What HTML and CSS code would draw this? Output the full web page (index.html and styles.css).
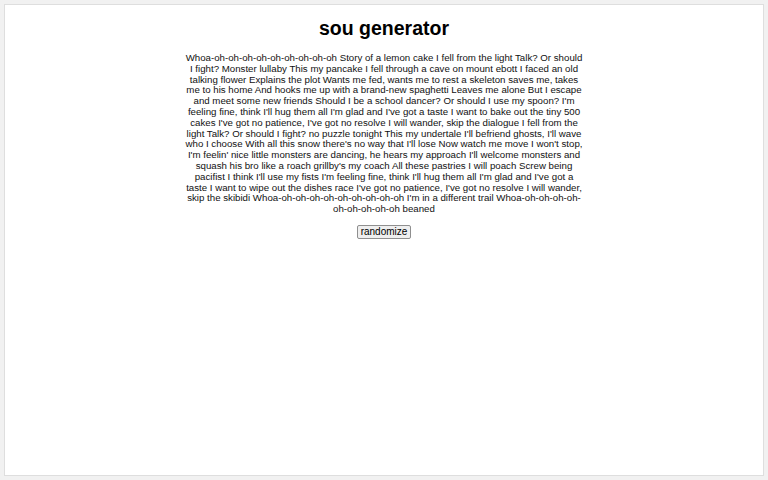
FILE: index.html
```html
<!DOCTYPE html>
<html lang="en">
<head>
    <meta charset="UTF-8">
    <title>sou generator</title>
    <link rel="stylesheet" href="styles.css">
</head>
<body>
    <div class="page">
        <h1 class="title">sou generator</h1>

        <p class="lyrics" id="lyrics">
            Whoa-oh-oh-oh-oh-oh-oh-oh-oh-oh Story of a lemon cake I fell from the light Talk? Or should I
            fight? Monster lullaby This my pancake I fell through a cave on mount ebott I faced an old
            talking flower Explains the plot Wants me fed, wants me to rest a skeleton saves me, takes me
            to his home And hooks me up with a brand-new spaghetti Leaves me alone But I escape and
            meet some new friends Should I be a school dancer? Or should I use my spoon? I'm feeling fine,
            think I'll hug them all I'm glad and I've got a taste I want to bake out the tiny 500 cakes I've got no
            patience, I've got no resolve I will wander, skip the dialogue I fell from the light Talk? Or
            should I fight? no puzzle tonight This my undertale I'll befriend ghosts, I'll wave who I
            choose With all this snow there's no way that I'll lose Now watch me move I won't stop, I'm feelin'
            nice little monsters are dancing, he hears my approach I'll welcome monsters and squash his bro
            like a roach grillby's my coach All these pastries I will poach Screw being pacifist I think I'll
            use my fists I'm feeling fine, think I'll hug them all I'm glad and I've got a taste I want to wipe out
            the dishes race I've got no patience, I've got no resolve I will wander, skip the skibidi
            Whoa-oh-oh-oh-oh-oh-oh-oh-oh-oh I'm in a different trail Whoa-oh-oh-oh-oh-oh-oh-oh-oh-oh
            beaned
        </p>

        <button class="randomize" id="randomize">randomize</button>
    </div>
</body>
</html>
```

FILE: styles.css
```css
body {
    margin: 0;
    padding: 4px;
    background-color: #f1f1f1;
    font-family: "Liberation Sans", Arial, sans-serif;
}
.page {
    box-sizing: border-box;
    height: 472px;
    background-color: #ffffff;
    border: 1px solid #dedede;
    display: flex;
    flex-direction: column;
    align-items: center;
    padding-top: 12px;
}
.title {
    margin: 0;
    font-size: 19.5px;
    line-height: 23px;
    font-weight: bold;
    color: #000000;
}
.lyrics {
    width: 402px;
    margin: 13px 0 10px;
    font-size: 9.7px;
    line-height: 10.8px;
    text-align: center;
    color: #111111;
}
.randomize {
    font-family: "Liberation Sans", Arial, sans-serif;
    font-size: 10px;
    line-height: 12px;
    padding: 0 3px;
    color: #000000;
    background-color: #efefef;
    border: 1px solid #8f8f8f;
    border-radius: 2px;
}
```
